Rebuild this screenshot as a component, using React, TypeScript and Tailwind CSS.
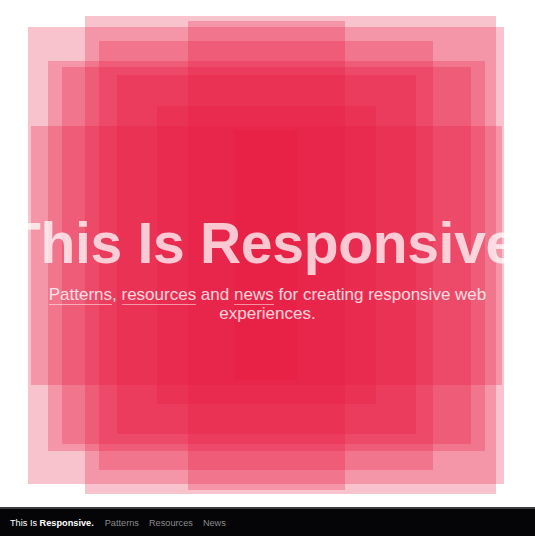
import React from 'react';

// x, y, width, height of every translucent layer, back to front
const layers: [number, number, number, number][] = [
  [28, 27, 476, 457],
  [85, 16, 411, 478],
  [188, 21, 157, 469],
  [99, 41, 334, 429],
  [48, 61, 437, 390],
  [62, 67, 409, 377],
  [117, 75, 299, 359],
  [157, 106, 219, 298],
  [31, 126, 471, 259],
  [234, 130, 63, 250],
];

function Squares() {
  return (
    <svg width="535" height="507" viewBox="0 0 535 507" className="block">
      {layers.map(([x, y, w, h], i) => (
        <rect key={i} x={x} y={y} width={w} height={h} fill="#e6163f" fillOpacity={0.26} />
      ))}
    </svg>
  );
}

export default function App() {
  const font = { fontFamily: '"Liberation Sans", Arial, sans-serif' };

  return (
    <div className="w-[535px] h-[536px] bg-white flex flex-col overflow-hidden" style={font}>
      <main className="grid h-[507px] overflow-hidden">
        <div className="col-start-1 row-start-1">
          <Squares />
        </div>

        <div className="col-start-1 row-start-1 flex flex-col items-center pt-[213px]">
          <h1 className="text-[57px] leading-[60px] font-bold text-white/75 whitespace-nowrap tracking-[-0.3px] -ml-[12px]">
            This Is Responsive
          </h1>
          <p className="mt-[12px] w-[450px] text-center text-[17px] leading-[19px] text-white/80">
            <a className="border-b border-white/50">Patterns</a>,{' '}
            <a className="border-b border-white/50">resources</a> and{' '}
            <a className="border-b border-white/50">news</a> for creating responsive web experiences.
          </p>
        </div>
      </main>

      <footer className="h-[29px] bg-[#050507] border-t-2 border-[#3c3c3e] flex items-center pt-[3px] px-[10px] text-[9.2px]">
        <span className="text-white">
          This Is <b className="font-bold">Responsive.</b>
        </span>
        <nav className="flex gap-[10px] ml-[11px] text-[#8a8a8e]">
          <a>Patterns</a>
          <a>Resources</a>
          <a>News</a>
        </nav>
      </footer>
    </div>
  );
}
